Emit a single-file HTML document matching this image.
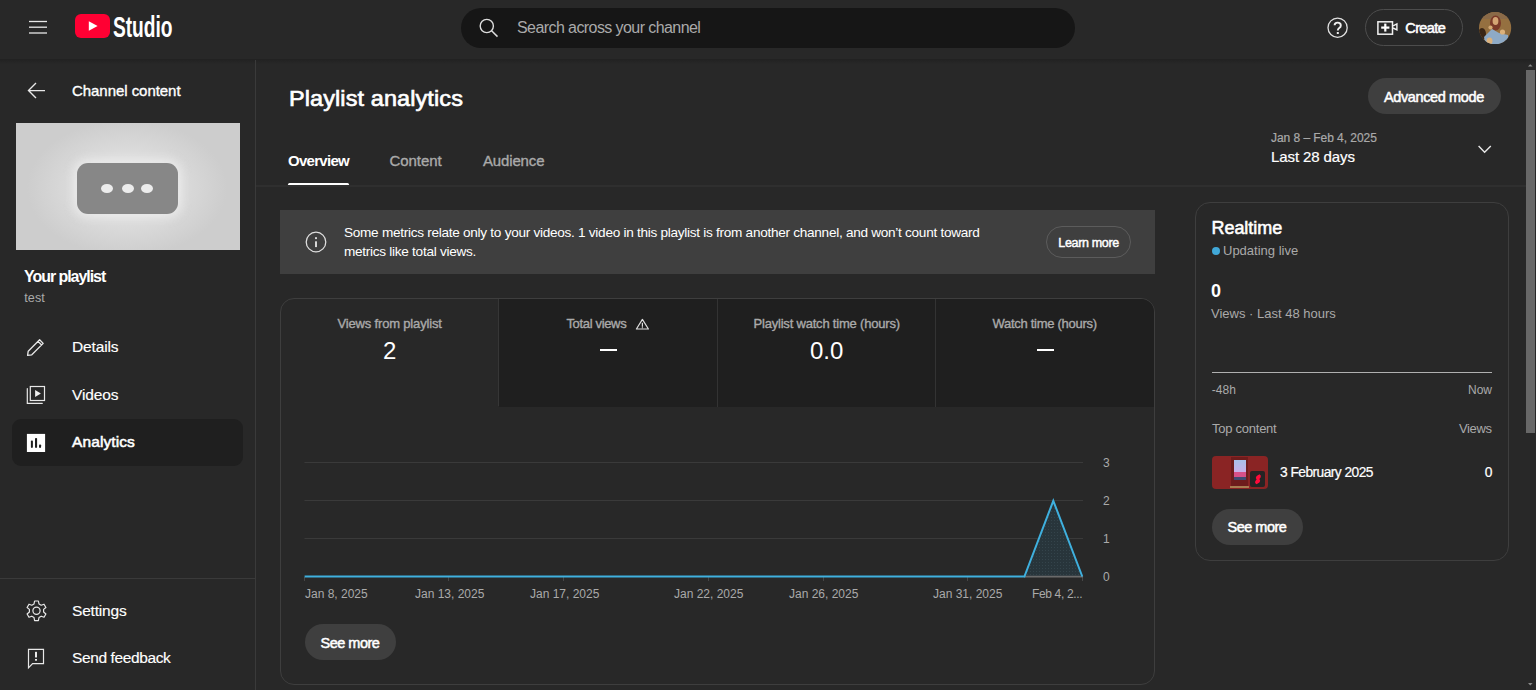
<!DOCTYPE html>
<html><head><meta charset="utf-8">
<style>
*{margin:0;padding:0;box-sizing:border-box}
html,body{width:1536px;height:690px;overflow:hidden;background:#282828;font-family:"Liberation Sans",sans-serif;color:#fff}
.a{position:absolute;white-space:nowrap;line-height:1}
.b{font-weight:bold}
.m{-webkit-text-stroke:0.35px currentColor}
.m5{-webkit-text-stroke:0.55px currentColor}
.g{color:#aaa}
svg{position:absolute;overflow:visible}
</style></head><body>
<!-- HEADER -->
<div class="a" style="left:0;top:0;width:1536px;height:60px;background:#282828"></div>
<svg style="left:29px;top:20px" width="18" height="14"><g stroke="#e8e8e8" stroke-width="1.3"><line x1="0" y1="1.5" x2="18" y2="1.5"/><line x1="0" y1="7.2" x2="18" y2="7.2"/><line x1="0" y1="13" x2="18" y2="13"/></g></svg>
<svg style="left:75px;top:14px" width="36" height="25"><rect x="0" y="0" width="35" height="24" rx="6" fill="#ff0033"/><path d="M13.8 7.2 L22.6 12 L13.8 16.8Z" fill="#fff"/></svg>
<div class="a b" style="left:113px;top:12.4px;font-size:30px;transform:scaleX(0.64);transform-origin:0 0;letter-spacing:-0.1px">Studio</div>

<div class="a" style="left:461px;top:8px;width:614px;height:40px;border-radius:20px;background:#161616"></div>
<svg style="left:479px;top:18px" width="20" height="20"><circle cx="7.8" cy="8" r="6.6" fill="none" stroke="#ddd" stroke-width="1.4"/><line x1="12.6" y1="12.8" x2="18.5" y2="18.6" stroke="#ddd" stroke-width="1.5"/></svg>
<div class="a g" style="left:517px;top:20px;font-size:16px;letter-spacing:-0.58px">Search across your channel</div>

<svg style="left:0;top:0" width="1536" height="60"><circle cx="1337.6" cy="27.7" r="9.6" fill="none" stroke="#e0e0e0" stroke-width="1.3"/><path d="M1334.6 25.2 Q1334.6 22.6 1337.6 22.6 Q1340.8 22.6 1340.8 25.4 Q1340.8 27 1339.2 28 Q1337.8 28.9 1337.8 30.6" fill="none" stroke="#f0f0f0" stroke-width="1.9"/><rect x="1336.8" y="32" width="2" height="2" fill="#f0f0f0"/></svg>
<div class="a" style="left:1365px;top:9px;width:98px;height:37px;border-radius:19px;border:1px solid #4d4d4d"></div>
<svg style="left:0;top:0" width="1536" height="60"><rect x="1377.9" y="21.8" width="14.6" height="12.4" fill="none" stroke="#f0f0f0" stroke-width="1.5"/><path d="M1393.1 25.8 L1396.9 23.9 V29.8 L1393.1 28" fill="none" stroke="#f0f0f0" stroke-width="1.4" stroke-linejoin="miter"/><rect x="1384.2" y="23.6" width="2.2" height="8" fill="#fff"/><rect x="1381.2" y="26.5" width="8.2" height="2.2" fill="#fff"/></svg>
<div class="a m" style="left:1405.3px;top:20.9px;font-size:14.5px;letter-spacing:-0.62px;-webkit-text-stroke-width:0.55px">Create</div>
<svg style="left:0;top:0" width="1536" height="60"><defs><clipPath id="avc"><circle cx="1495.1" cy="28" r="16.1"/></clipPath></defs><g clip-path="url(#avc)"><rect x="1478" y="11" width="35" height="35" fill="#957040"/><rect x="1478" y="11" width="35" height="8" fill="#8a6a48"/><ellipse cx="1482" cy="34" rx="4" ry="6" fill="#3a2616"/><ellipse cx="1495.5" cy="23" rx="5.5" ry="7.5" fill="#7a3828"/><ellipse cx="1495.5" cy="21" rx="2.9" ry="3.9" fill="#d4a474"/><path d="M1484 37 L1492 29 L1499 33 L1508 35 L1509 46 L1486 46Z" fill="#8eaac6"/><circle cx="1502.5" cy="32" r="2.6" fill="#dcb27c"/><circle cx="1490.5" cy="27.5" r="2.1" fill="#d2a874"/><ellipse cx="1489.5" cy="41" rx="3" ry="3.5" fill="#dcb27c"/></g></svg>

<div class="a" style="left:0;top:59px;width:1536px;height:5px;background:linear-gradient(#212121,rgba(33,33,33,0))"></div>
<!-- SIDEBAR -->
<div class="a" style="left:255px;top:60px;width:1px;height:630px;background:#3a3a3a"></div>
<svg style="left:27px;top:82px" width="20" height="18"><path d="M18 8.6 H1.5 M9 1.1 L1.5 8.6 L9 16.1" fill="none" stroke="#e8e8e8" stroke-width="1.4"/></svg>
<div class="a m" style="left:72px;top:83.4px;font-size:15px;letter-spacing:-0.05px">Channel content</div>
<div class="a" style="left:16px;top:123px;width:224px;height:127px;background:radial-gradient(ellipse 100px 68px at 111px 65px,#e8e8e8 0%,#dcdcdc 50%,#cdcdcd 100%)"></div>
<div class="a" style="left:76.5px;top:163.3px;width:101px;height:50.5px;border-radius:11px;background:#878787;box-shadow:0 0 10px 4px rgba(240,240,240,0.7)"></div>
<div class="a" style="left:101px;top:184px;width:12px;height:9px;border-radius:50%;background:#ececec"></div>
<div class="a" style="left:122px;top:184px;width:12px;height:9px;border-radius:50%;background:#ececec"></div>
<div class="a" style="left:141px;top:184px;width:12px;height:9px;border-radius:50%;background:#ececec"></div>
<div class="a b" style="left:24px;top:268.6px;font-size:16px;letter-spacing:-1.05px">Your playlist</div>
<div class="a g" style="left:24.3px;top:292.2px;font-size:12.6px;letter-spacing:0.05px">test</div>

<svg style="left:26px;top:337px" width="20" height="20"><path d="M2.2 14.2 L13.6 2.8 L17.2 6.4 L5.8 17.8 L1.6 18.4 Z M12 4.4 L15.6 8" fill="none" stroke="#e8e8e8" stroke-width="1.3" stroke-linejoin="round"/></svg>
<div class="a m" style="left:72px;top:338.6px;font-size:15.5px;letter-spacing:-0.15px;-webkit-text-stroke-width:0.15px">Details</div>
<svg style="left:0;top:0" width="256" height="690"><rect x="30.3" y="386.5" width="14.2" height="14" fill="none" stroke="#e8e8e8" stroke-width="1.2"/><path d="M27.3 388.5 V403.3 H42.3" fill="none" stroke="#e8e8e8" stroke-width="1.2" stroke-linecap="round"/><path d="M35.1 390 L40.9 393.5 L35.1 397Z" fill="#f0f0f0"/></svg>
<div class="a m" style="left:72px;top:386.8px;font-size:15.5px;letter-spacing:-0.1px;-webkit-text-stroke-width:0.15px">Videos</div>
<div class="a" style="left:12px;top:419px;width:231px;height:47px;border-radius:9px;background:#1f1f1f"></div>
<svg style="left:0;top:0" width="256" height="690"><rect x="26.9" y="433.9" width="18.2" height="18.1" fill="#fff"/><rect x="30.9" y="440.6" width="2" height="7.3" rx="0.8" fill="#1f1f1f"/><rect x="35" y="438" width="2.1" height="9.9" rx="0.8" fill="#1f1f1f"/><rect x="39" y="444.5" width="2.1" height="3.4" rx="0.8" fill="#1f1f1f"/></svg>
<div class="a m5" style="left:72px;top:434.4px;font-size:15.5px;letter-spacing:0.1px">Analytics</div>

<div class="a" style="left:0;top:578px;width:255px;height:1px;background:#3a3a3a"></div>
<svg style="left:26px;top:600px" width="21" height="22"><path d="M8.6 1 H12.4 L13 4 L15.2 5.2 L18 4.2 L19.9 7.5 L17.6 9.4 V12 L19.9 14 L18 17.3 L15.2 16.2 L13 17.5 L12.4 20.6 H8.6 L8 17.5 L5.8 16.2 L3 17.3 L1.1 14 L3.4 12 V9.4 L1.1 7.5 L3 4.2 L5.8 5.2 L8 4 Z" fill="none" stroke="#e8e8e8" stroke-width="1.2" stroke-linejoin="round"/><circle cx="10.5" cy="10.8" r="3.6" fill="none" stroke="#e8e8e8" stroke-width="1.2"/></svg>
<div class="a m" style="left:72px;top:602.5px;font-size:15.5px;letter-spacing:-0.18px;-webkit-text-stroke-width:0.15px">Settings</div>
<svg style="left:0;top:0" width="256" height="690"><path d="M28.5 649.3 H43.5 V663.6 H32.6 L28.5 667.8 Z" fill="none" stroke="#e8e8e8" stroke-width="1.2" stroke-linejoin="miter"/><rect x="35.1" y="651.7" width="1.8" height="5.8" rx="0.5" fill="#fff"/><rect x="35.1" y="659" width="1.8" height="1.7" fill="#fff"/></svg>
<div class="a m" style="left:72px;top:650.2px;font-size:15.5px;letter-spacing:-0.38px;-webkit-text-stroke-width:0.15px">Send feedback</div>

<!-- scrollbar -->
<div class="a" style="left:1526px;top:70px;width:8.5px;height:363px;background:#686868"></div>
<svg style="left:1527px;top:63px" width="7" height="5"><path d="M1 3.6 L3.3 1.2 L5.6 3.6Z" fill="#8a8a8a"/></svg>
<svg style="left:1527px;top:682px" width="7" height="5"><path d="M1 1 L3.3 3.6 L5.6 1Z" fill="#8a8a8a"/></svg>

<!-- MAIN HEADER -->
<div class="a" style="left:288.6px;top:88.2px;font-size:22px;letter-spacing:0.1px;-webkit-text-stroke:0.65px #fff;transform:scaleX(1.066);transform-origin:0 0">Playlist analytics</div>
<div class="a b" style="left:288px;top:153.4px;font-size:15px;letter-spacing:-0.72px">Overview</div>
<div class="a m g" style="left:389.5px;top:153.2px;font-size:15px;letter-spacing:-0.05px">Content</div>
<div class="a m g" style="left:483px;top:153.2px;font-size:15px;letter-spacing:-0.15px">Audience</div>
<div class="a" style="left:288px;top:183px;width:61px;height:3px;border-radius:2px;background:#fff"></div>
<div class="a" style="left:256px;top:185px;width:1270px;height:2px;background:#2f2f2f"></div>

<div class="a" style="left:1368px;top:78px;width:133px;height:36px;border-radius:18px;background:#3f3f3f"></div>
<div class="a m" style="left:1384px;top:89.5px;font-size:14.5px;letter-spacing:-0.38px;-webkit-text-stroke-width:0.5px">Advanced mode</div>
<div class="a g m" style="left:1271px;top:131.6px;font-size:12px;-webkit-text-stroke-width:0.2px;letter-spacing:-0.05px">Jan 8 – Feb 4, 2025</div>
<div class="a m" style="left:1271px;top:148.7px;font-size:15px;-webkit-text-stroke-width:0.2px;letter-spacing:-0.1px">Last 28 days</div>
<svg style="left:1478px;top:145px" width="14" height="9"><path d="M0.6 1 L6.6 7.3 L12.8 1" fill="none" stroke="#e8e8e8" stroke-width="1.4"/></svg>

<!-- BANNER -->
<div class="a" style="left:280px;top:210px;width:875px;height:64px;background:#3f3f3f"></div>
<svg style="left:305px;top:231px" width="22" height="22"><circle cx="11" cy="11" r="9.8" fill="none" stroke="#e0e0e0" stroke-width="1.25"/><rect x="10.1" y="10.3" width="1.8" height="5.8" fill="#e8e8e8"/><rect x="10.1" y="6.2" width="1.8" height="1.9" fill="#e8e8e8"/></svg>
<div class="a" style="left:344px;top:222.8px;font-size:13.6px;line-height:19.4px;white-space:normal;width:720px;letter-spacing:-0.28px">Some metrics relate only to your videos. 1 video in this playlist is from another channel, and won’t count toward<br>metrics like total views.</div>
<div class="a" style="left:1046px;top:226px;width:85px;height:32px;border-radius:16px;border:1px solid #5c5c5c"></div>
<div class="a m" style="left:1058.3px;top:236.8px;font-size:12.5px;letter-spacing:-0.33px;-webkit-text-stroke-width:0.45px">Learn more</div>

<!-- CHART CARD -->
<div class="a" style="left:280px;top:298px;width:875px;height:387px;border-radius:14px;border:1px solid #3e3e3e;overflow:hidden">
  <div class="a" style="left:218px;top:0;width:656px;height:108px;background:#1f1f1f"></div>
  <div class="a" style="left:436px;top:0;width:1px;height:108px;background:#333"></div>
  <div class="a" style="left:654px;top:0;width:1px;height:108px;background:#333"></div>
</div>
<div class="a" style="left:498px;top:299px;width:1px;height:107px;background:#363636"></div>
<div class="a m g" style="left:337.5px;top:317.4px;font-size:13px;letter-spacing:-0.17px">Views from playlist</div>
<div class="a" style="left:383px;top:339px;font-size:24px">2</div>
<div class="a m g" style="left:566.4px;top:317.4px;font-size:13px;letter-spacing:-0.33px">Total views</div>
<svg style="left:0;top:0" width="1536" height="690"><path d="M642.4 319.4 L648.4 329 H636.4 Z" fill="none" stroke="#ddd" stroke-width="1.2" stroke-linejoin="round"/><rect x="641.8" y="322.8" width="1.2" height="4" fill="#ddd"/><rect x="641.8" y="327.3" width="1.2" height="1" fill="#ddd"/></svg>
<div class="a" style="left:600.2px;top:349.4px;width:16.8px;height:1.9px;background:#fff"></div>
<div class="a m g" style="left:753.5px;top:317.4px;font-size:13px;letter-spacing:-0.2px">Playlist watch time (hours)</div>
<div class="a" style="left:810px;top:339px;font-size:24px">0.0</div>
<div class="a m g" style="left:992.5px;top:317.4px;font-size:13px;letter-spacing:-0.28px">Watch time (hours)</div>
<div class="a" style="left:1037.2px;top:349.4px;width:16.8px;height:1.9px;background:#fff"></div>

<svg style="left:0;top:0" width="1536" height="690">
  <defs><pattern id="dots" width="3" height="3" patternUnits="userSpaceOnUse"><rect width="3" height="3" fill="#28353b"/><rect x="1" y="1" width="1" height="1" fill="#34444b"/></pattern></defs>
  <g stroke="#3a3a3a" stroke-width="1">
    <line x1="304.5" y1="462.5" x2="1083" y2="462.5"/>
    <line x1="304.5" y1="500.5" x2="1083" y2="500.5"/>
    <line x1="304.5" y1="538.5" x2="1083" y2="538.5"/>
  </g>
  <g stroke="#474747" stroke-width="1">
    <line x1="304.5" y1="577" x2="304.5" y2="581"/>
    <line x1="448.5" y1="577" x2="448.5" y2="581"/>
    <line x1="563.5" y1="577" x2="563.5" y2="581"/>
    <line x1="708.5" y1="577" x2="708.5" y2="581"/>
    <line x1="823.5" y1="577" x2="823.5" y2="581"/>
    <line x1="967.5" y1="577" x2="967.5" y2="581"/>
    <line x1="1082.5" y1="577" x2="1082.5" y2="581"/>
  </g>
  <path d="M1024.4 576.5 L1053.3 500.8 L1082.3 576.5Z" fill="url(#dots)"/>
  <line x1="1024" y1="576.6" x2="1083" y2="576.6" stroke="#6a6a6a" stroke-width="1.6"/>
  <path d="M304.6 576.5 L1024.4 576.5 L1053.3 500.8 L1082.3 576.5" fill="none" stroke="#3fb0de" stroke-width="2" stroke-linejoin="miter"/>
</svg>
<div class="a g" style="left:1103px;top:457px;font-size:12px">3</div>
<div class="a g" style="left:1103px;top:495px;font-size:12px">2</div>
<div class="a g" style="left:1103px;top:533px;font-size:12px">1</div>
<div class="a g" style="left:1103px;top:571px;font-size:12px">0</div>
<div class="a g" style="left:305px;top:587.8px;font-size:12px">Jan 8, 2025</div>
<div class="a g" style="left:415px;top:587.8px;font-size:12px">Jan 13, 2025</div>
<div class="a g" style="left:530px;top:587.8px;font-size:12px">Jan 17, 2025</div>
<div class="a g" style="left:674px;top:587.8px;font-size:12px">Jan 22, 2025</div>
<div class="a g" style="left:789px;top:587.8px;font-size:12px">Jan 26, 2025</div>
<div class="a g" style="left:933px;top:587.8px;font-size:12px">Jan 31, 2025</div>
<div class="a g" style="left:1032px;top:587.8px;font-size:12px;letter-spacing:-0.35px">Feb 4, 2...</div>
<div class="a" style="left:305px;top:624px;width:91px;height:36px;border-radius:18px;background:#3f3f3f"></div>
<div class="a m" style="left:320.5px;top:635.6px;font-size:14.5px;letter-spacing:-0.5px;-webkit-text-stroke-width:0.5px">See more</div>

<!-- REALTIME CARD -->
<div class="a" style="left:1195px;top:202px;width:314px;height:359px;border-radius:15px;border:1px solid #3e3e3e"></div>
<div class="a m5" style="left:1211.5px;top:219px;font-size:18px;letter-spacing:-0.05px">Realtime</div>
<div class="a" style="left:1212px;top:246.7px;width:8px;height:8px;border-radius:50%;background:#41a8d8"></div>
<div class="a g" style="left:1223px;top:243.5px;font-size:13px">Updating live</div>
<div class="a b" style="left:1211px;top:281.5px;font-size:18px">0</div>
<div class="a g" style="left:1211px;top:306.7px;font-size:13px">Views · Last 48 hours</div>
<div class="a" style="left:1212px;top:371.6px;width:280px;height:1.8px;background:#b0b0b0"></div>
<div class="a g" style="left:1211.8px;top:383.6px;font-size:12px">-48h</div>
<div class="a g" style="left:1468px;top:383.6px;font-size:12px">Now</div>
<div class="a g" style="left:1212px;top:422.4px;font-size:13px;letter-spacing:-0.25px">Top content</div>
<div class="a g" style="left:1459px;top:422.4px;font-size:13px;letter-spacing:-0.35px">Views</div>
<div class="a" style="left:1212px;top:456px;width:56px;height:33px;border-radius:4px;background:#8a2424;overflow:hidden">
  <div class="a" style="left:19px;top:1px;width:17px;height:29px;background:#6e1c1c"></div>
  <div class="a" style="left:21.5px;top:3.5px;width:12.2px;height:12.7px;background:linear-gradient(#a8c0e8,#c8b0e8)"></div>
  <div class="a" style="left:21.5px;top:16.2px;width:12.2px;height:5.2px;background:#d85088"></div>
  <div class="a" style="left:21.5px;top:21.4px;width:12.2px;height:3px;background:#404a70"></div>
  <div class="a" style="left:18px;top:29.6px;width:18.7px;height:2.4px;background:#a87c50"></div>
  <div class="a" style="left:38px;top:15px;width:15.2px;height:16px;border-radius:2px;background:#242424"></div>
  <svg style="left:38px;top:15px" width="16" height="16"><path d="M9.6 3.2 Q11.6 4.4 10.6 6.6 L9.4 8 Q11 9.6 9.4 11.6 L6.6 13.2 Q4.4 12.2 5.4 10 L6.6 8.6 Q5 7 6.6 5 Z" fill="#ff0a3a"/></svg>
</div>
<div class="a m" style="left:1280px;top:465.6px;font-size:13.8px;letter-spacing:-0.55px;-webkit-text-stroke-width:0.2px">3 February 2025</div>
<div class="a m" style="left:1484.7px;top:465.6px;font-size:13.8px;-webkit-text-stroke-width:0.2px">0</div>
<div class="a" style="left:1212px;top:508.5px;width:91px;height:36px;border-radius:18px;background:#3f3f3f"></div>
<div class="a m" style="left:1227.5px;top:519.8px;font-size:14.5px;letter-spacing:-0.5px;-webkit-text-stroke-width:0.5px">See more</div>
</body></html>
